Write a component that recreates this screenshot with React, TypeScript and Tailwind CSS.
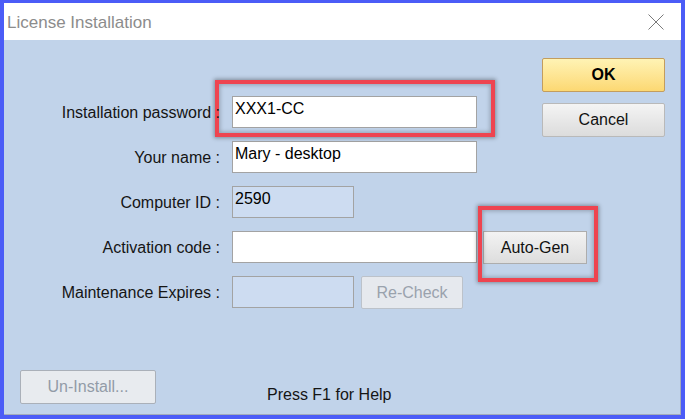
import React from "react";

const labelCls = "relative z-10 w-[216px] shrink-0 whitespace-nowrap text-right text-[16px] leading-[19px] text-[#151515]";
const fieldCls = "h-[32px] shrink-0 border border-[#a3a3a3] pl-[2px] pt-[2px] text-[16px] leading-[19px] text-black";

function Row({ label, children }: { label: string; children: React.ReactNode }) {
  return (
    <div className="flex h-[32px] items-center gap-[12px]">
      <div className={labelCls}>{label}</div>
      <div className="flex h-[32px] shrink-0 items-start">{children}</div>
    </div>
  );
}

function CloseIcon() {
  return (
    <svg width="16" height="16" viewBox="0 0 16 16" className="block">
      <path d="M0.5 0.5 L15.5 15.5 M15.5 0.5 L0.5 15.5" stroke="#7a7a7a" strokeWidth="1" fill="none" />
    </svg>
  );
}

export default function App() {
  return (
    <div className="h-[419px] w-[685px] overflow-hidden bg-[#4b5cf7] pt-[3px] pl-[4px] pr-[4px] pb-[4px] font-['Liberation_Sans',Arial,sans-serif]">
      <div className="flex h-full flex-col">
        {/* title bar */}
        <div className="flex h-[37px] shrink-0 items-center justify-between bg-white pl-[3px] pr-[17px]">
          <span className="pt-[2px] text-[17px] leading-[20px] text-[#8c8c8c]">License Installation</span>
          <div className="pt-[1px]">
            <CloseIcon />
          </div>
        </div>

        {/* body */}
        <div className="relative flex flex-1 border-r border-b border-[#a3acbb] bg-[#c1d3ea]">
          <div className="flex w-[538px] shrink-0 flex-col pt-[56px]">
            <div className="flex flex-col gap-[13px]">
              <Row label="Installation password :">
                <div className={`${fieldCls} w-[245px] bg-white`}>XXX1-CC</div>
              </Row>
              <Row label="Your name :">
                <div className={`${fieldCls} w-[245px] bg-white`}>Mary - desktop</div>
              </Row>
              <Row label="Computer ID :">
                <div className={`${fieldCls} w-[122px] bg-[#cddcf1]`}>2590</div>
              </Row>
              <Row label="Activation code :">
                <div className={`${fieldCls} w-[245px] bg-white`}></div>
                <button className="ml-[6px] h-[33px] w-[104px] shrink-0 border border-[#adadad] bg-gradient-to-b from-[#f3f3f3] to-[#dddddd] text-[16px] text-[#111]">
                  Auto-Gen
                </button>
              </Row>
              <Row label="Maintenance Expires :">
                <div className={`${fieldCls} w-[122px] bg-[#cddcf1]`}></div>
                <button
                  disabled
                  className="ml-[7px] h-[33px] w-[102px] shrink-0 rounded-[2px] border border-[#bcc2ca] bg-[#e6e9ee] text-[16px] text-[#9aa2ad]"
                >
                  Re-Check
                </button>
              </Row>
            </div>

            <div className="mt-[62px] flex items-end pl-[16px]">
              <button
                disabled
                className="h-[34px] w-[136px] shrink-0 rounded-[2px] border border-[#aab0b9] bg-[#e8ebef] text-[16px] text-[#929ba7]"
              >
                Un-Install...
              </button>
              <span className="ml-[111px] whitespace-nowrap text-[16px] leading-[19px] text-[#151515]">Press F1 for Help</span>
            </div>
          </div>

          <div className="ml-auto flex shrink-0 flex-col gap-[11px] pt-[18px] pr-[15px]">
            <button className="h-[34px] w-[123px] rounded-[2px] border border-[#c39d5e] bg-gradient-to-b from-[#fff3b4] to-[#fcd872] text-[16px] font-bold text-black">
              OK
            </button>
            <button className="h-[34px] w-[123px] rounded-[2px] border border-[#b9b9b9] bg-gradient-to-b from-[#f4f4f4] to-[#dcdcdc] text-[16px] text-[#111]">
              Cancel
            </button>
          </div>

          {/* annotation boxes */}
          <div className="pointer-events-none absolute left-[211px] top-[40px] h-[57px] w-[280px] border-[4px] border-[#ee4450] shadow-[0_0_4px_1px_rgba(0,0,0,0.35),inset_0_0_4px_1px_rgba(0,0,0,0.25)]" />
          <div className="pointer-events-none absolute left-[474px] top-[166px] h-[76px] w-[120px] border-[4px] border-[#ee4450] shadow-[0_0_4px_1px_rgba(0,0,0,0.35),inset_0_0_4px_1px_rgba(0,0,0,0.25)]" />
        </div>
      </div>
    </div>
  );
}
